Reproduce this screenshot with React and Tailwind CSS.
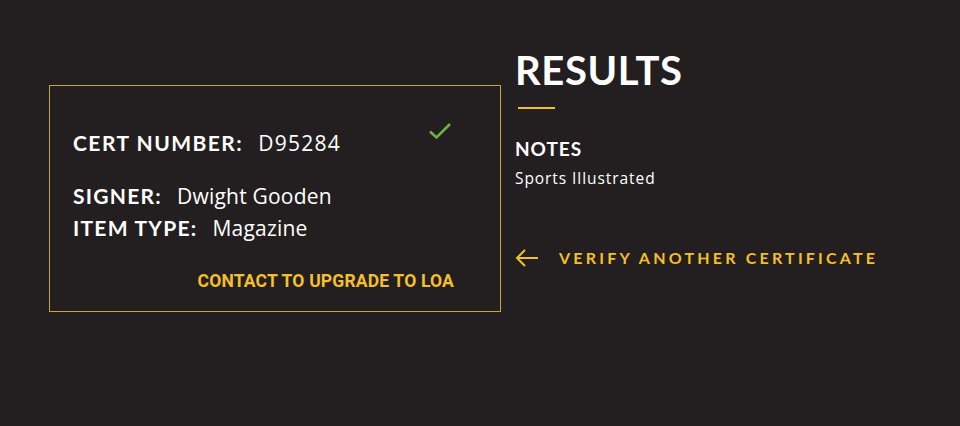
/**
 * Certificate verification result
 *
 * Dark panel with a bordered cert card on the left and results/notes on the right.
 */

const heading = { fontFamily: "Lato, 'Open Sans', sans-serif" };
const body = { fontFamily: "'Open Sans', 'Noto Sans', sans-serif" };

const rows = [
  { label: "SIGNER:", value: "Dwight Gooden" },
  { label: "ITEM TYPE:", value: "Magazine" },
];

const CheckIcon = () => (
  <svg width="24" height="18" viewBox="0 0 24 18" fill="none">
    <path d="M2 9.5 L8.5 15.5 L22 2" stroke="#6db33f" strokeWidth="2.6" />
  </svg>
);

const ArrowLeft = () => (
  <svg width="24" height="20" viewBox="0 0 24 20" fill="none">
    <path d="M23 10 H2 M10 2 L2 10 L10 18" stroke="#f4bf2a" strokeWidth="2" />
  </svg>
);

const App = () => {
  return (
    <div className="w-[960px] h-[426px] bg-[#231f20] text-white overflow-hidden">
      <div className="flex pt-[50px] pl-[49px]">
        {/* Cert card */}
        <div className="mt-[35px] w-[452px] h-[227px] border border-[#c9a33b] pl-[23px] pr-[46px] pt-[36px]">
          <div className="flex items-start justify-between">
            <p className="text-[21px] leading-none mt-[10px]">
              <span className="font-bold tracking-[0.07em]" style={heading}>CERT NUMBER:</span>
              <span className="ml-[15px] font-normal tracking-[0.06em]" style={body}>D95284</span>
            </p>
            <div className="mr-[2px]">
              <CheckIcon />
            </div>
          </div>
          <div className="mt-[30px] space-y-[8px]">
            {rows.map((row) => (
              <p key={row.label} className="text-[21px] leading-[23px]">
                <span className="font-bold tracking-[0.06em]" style={heading}>{row.label}</span>
                <span className="ml-[15px] tracking-[0.01em]" style={body}>{row.value}</span>
              </p>
            ))}
          </div>
          <div className="flex justify-end mt-[33px]">
            <a
              href="#"
              className="text-[#f4bf2a] text-[17.5px] font-bold tracking-[0.01em] leading-none no-underline"
              style={{ fontFamily: "Roboto, sans-serif" }}
            >
              CONTACT TO UPGRADE TO LOA
            </a>
          </div>
        </div>

        {/* Results */}
        <div className="ml-[14px]">
          <h1 className="text-[40px] font-bold tracking-[0.015em] leading-none" style={heading}>
            RESULTS
          </h1>
          <div className="w-[37px] h-[2px] bg-[#f4bf2a] mt-[17px] ml-[3px]" />
          <h2 className="mt-[30px] text-[19px] font-bold tracking-[0.05em] leading-none" style={heading}>
            NOTES
          </h2>
          <p className="mt-[13px] text-[15.5px] tracking-[0.06em] leading-none" style={body}>
            Sports Illustrated
          </p>
          <a href="#" className="mt-[61px] flex items-center gap-[20px] no-underline">
            <ArrowLeft />
            <span
              className="text-[#f4bf2a] text-[16px] font-bold tracking-[0.2em] leading-none"
              style={heading}
            >
              VERIFY ANOTHER CERTIFICATE
            </span>
          </a>
        </div>
      </div>
    </div>
  );
};

export default App;
